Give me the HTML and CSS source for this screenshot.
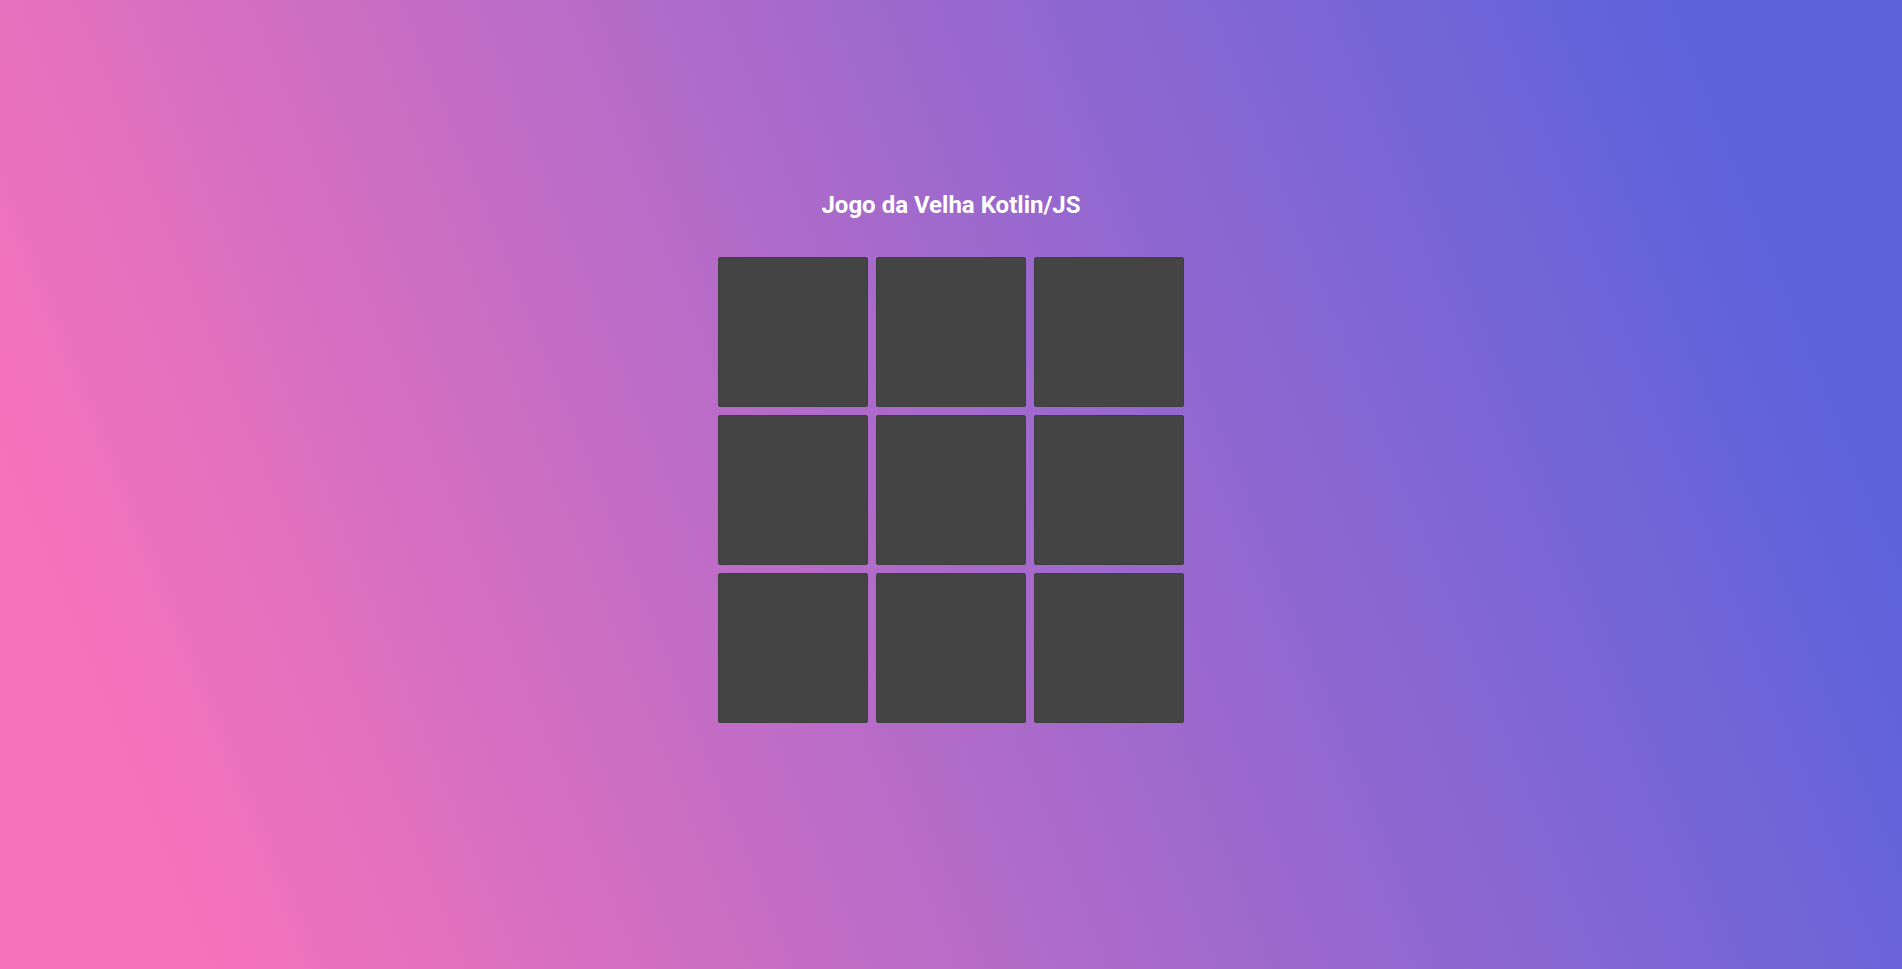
FILE: index.html
```html
<!DOCTYPE html>
<html lang="pt">
<head>
<meta charset="utf-8">
<title>Jogo da Velha Kotlin/JS</title>
<link rel="stylesheet" href="styles.css">
</head>
<body>
<main class="app">
  <h2 class="title">Jogo da Velha Kotlin/JS</h2>
  <div class="board">
    <button class="cell"></button>
    <button class="cell"></button>
    <button class="cell"></button>
    <button class="cell"></button>
    <button class="cell"></button>
    <button class="cell"></button>
    <button class="cell"></button>
    <button class="cell"></button>
    <button class="cell"></button>
  </div>
</main>
</body>
</html>
```

FILE: styles.css
```css
html, body {
  margin: 0;
  padding: 0;
  height: 100%;
}
body {
  font-family: Roboto, "Liberation Sans", Arial, sans-serif;
  background: linear-gradient(68deg, #f672ba 9%, #5b62dc 91%);
  color: #fff;
  overflow: hidden;
}
.app {
  display: flex;
  flex-direction: column;
  align-items: center;
  padding-top: 191px;
}
.title {
  margin: 0 0 38px 0;
  font-size: 24px;
  font-weight: 700;
  line-height: 28px;
  color: #fff;
}
.board {
  display: grid;
  grid-template-columns: repeat(3, 150px);
  grid-template-rows: repeat(3, 150px);
  gap: 8px;
}
.cell {
  margin: 0;
  padding: 0;
  box-sizing: border-box;
  width: 150px;
  height: 150px;
  background: #444444;
  border: 1px solid #3f3f3f;
  border-radius: 2px;
  cursor: pointer;
}
```
